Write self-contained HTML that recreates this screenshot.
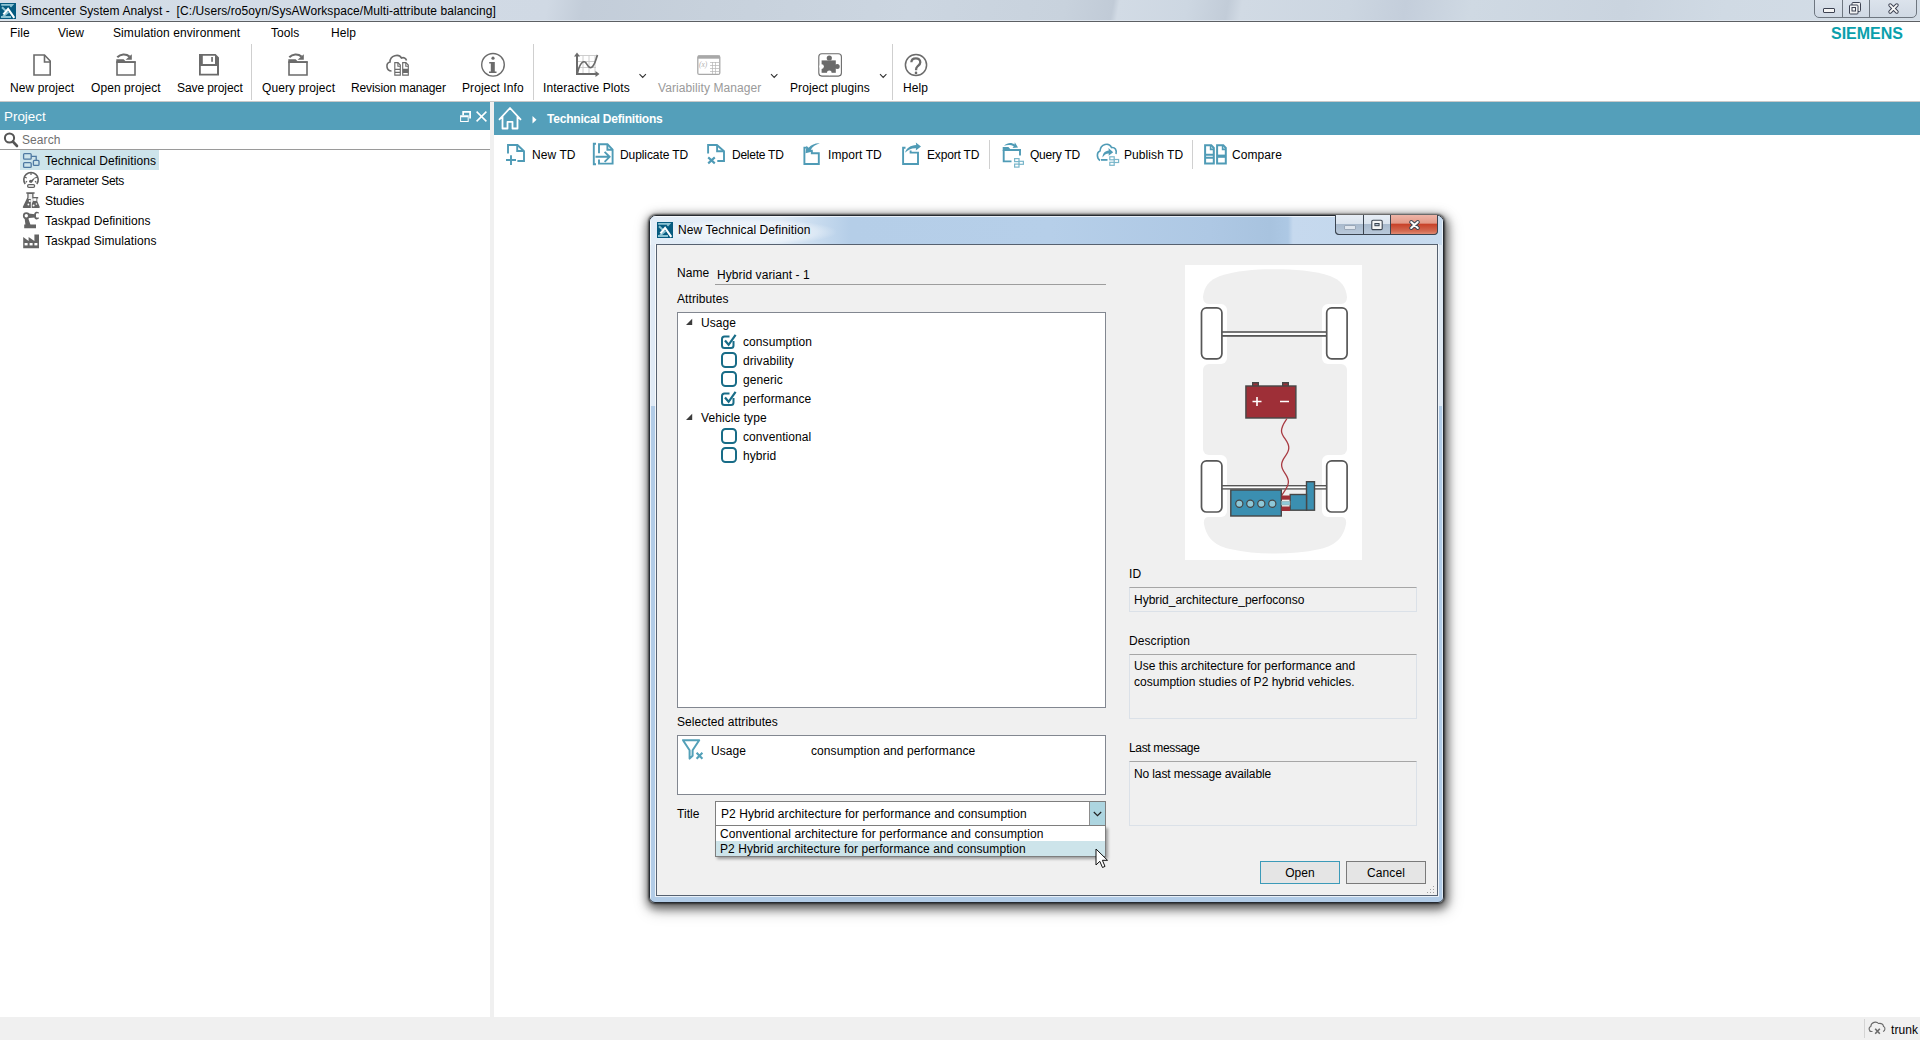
<!DOCTYPE html>
<html><head><meta charset="utf-8">
<style>
*{box-sizing:border-box}
html,body{margin:0;padding:0;overflow:hidden}
body{width:1920px;height:1040px;position:relative;overflow:hidden;background:#fff;font-family:"Liberation Sans",sans-serif;font-size:12px;color:#000}
.a{position:absolute}
.t{position:absolute;white-space:pre;line-height:14px;font-size:12px;letter-spacing:0.08px}
svg{position:absolute;overflow:visible}
</style></head><body>

<!-- ===== Main title bar ===== -->
<div class="a" style="left:0;top:0;width:1920px;height:21px;background:linear-gradient(100deg,#d5dee8 0px,#d0d9e4 540px,#c3cdd9 575px,#c7d1dc 700px,#ccd6e1 900px,#c8d2dd 1050px,#c1cbd7 1097px,#d2dbe5 1103px,#cdd7e2 1170px,#c2ccd8 1210px,#d1dae4 1224px,#ccd6e1 1330px,#c4cedb 1385px,#cfd9e3 1450px,#cad4df 1600px,#d0dae4 1700px,#d4dde7 1920px)"></div>
<div class="a" style="left:0;top:20px;width:1920px;height:1px;background:#dfe6ee"></div>
<div class="a" style="left:0;top:21px;width:1920px;height:1px;background:#5c5f63"></div>
<svg style="left:0;top:3px" width="16" height="16" viewBox="0 0 16 16"><rect width="16" height="16" fill="#065b80"/><path d="M1.2 1.9H12.2L10.4 3.9" fill="none" stroke="#8cc3d3" stroke-width="1.8"/><path d="M2 4.3L7.6 9.6L3 13.4M1 14.1H11" fill="none" stroke="#8cc3d3" stroke-width="2"/><path d="M3.4 11.4L8.1 5.9L14.3 14.8" fill="none" stroke="#fff" stroke-width="2.1"/></svg>
<div class="t" style="left:21px;top:4px">Simcenter System Analyst -  [C:/Users/ro5oyn/SysAWorkspace/Multi-attribute balancing]</div>

<!-- window controls -->
<div class="a" style="left:1814px;top:-3px;width:103px;height:21px;border:1px solid #6e7680;border-radius:0 0 5px 5px;background:linear-gradient(#dde4ed,#d0d9e4)"></div>
<div class="a" style="left:1842px;top:0;width:1px;height:17px;background:#6e7680"></div>
<div class="a" style="left:1869px;top:0;width:1px;height:17px;background:#6e7680"></div>
<div class="a" style="left:1823px;top:8px;width:12px;height:5px;border:1px solid #3d4252;border-radius:1px;background:#f4f4f4"></div>
<svg style="left:1848px;top:1px" width="14" height="14" viewBox="0 0 14 14"><rect x="4" y="1.5" width="8.5" height="9" rx="1" fill="#f0f0f0" stroke="#3d4252"/><rect x="1.5" y="4" width="8.5" height="9" rx="1" fill="#f4f4f4" stroke="#3d4252"/><rect x="4" y="6.5" width="3.5" height="3.5" fill="none" stroke="#3d4252"/></svg>
<svg style="left:1887px;top:2px" width="14" height="14" viewBox="0 0 14 14"><path d="M3.2 3.2L9.8 9.8M9.8 3.2L3.2 9.8" stroke="#3d4252" stroke-width="3.8" stroke-linecap="round"/><path d="M3.2 3.2L9.8 9.8M9.8 3.2L3.2 9.8" stroke="#f6f6f6" stroke-width="1.9" stroke-linecap="round"/></svg>

<!-- ===== Menu bar ===== -->
<div class="t" style="left:10px;top:26px">File</div>
<div class="t" style="left:58px;top:26px">View</div>
<div class="t" style="left:113px;top:26px">Simulation environment</div>
<div class="t" style="left:271px;top:26px">Tools</div>
<div class="t" style="left:331px;top:26px">Help</div>
<div class="t" style="left:1831px;top:25px;font-size:16px;line-height:18px;font-weight:bold;color:#0a9fac;letter-spacing:0">SIEMENS</div>

<!-- ===== Toolbar ===== -->
<svg style="left:0;top:0" width="940" height="100" viewBox="0 0 940 100">
 <g fill="none" stroke="#6b6b6b" stroke-width="1.6">
  <!-- new project -->
  <path d="M34 55H44.5L50.2 61V75H34Z"/><path d="M44.5 55V62H50.2"/>
  <!-- open project -->
  <path d="M117 75V62H135V75Z"/>
  <!-- save -->
  
  <!-- query project -->
  <path d="M289 75V62H307V75Z"/>
  <!-- revision cloud -->
  <path d="M391.5 71C386 71 385.5 63 390 62C390 55 399 53.5 401.5 58C403.5 57 406 58 406.5 60.5"/>
  <path d="M394.8 75.1V62.6H397.9L400.3 65V75.1Z M394.8 69.4H400.3 M394.8 72.3H400.3" stroke-width="1.15"/>
  <path d="M402.7 75.1V62.6H405.8L408.3 65V75.1Z M402.7 72.3H408.3 M402.7 69.4H408.3" stroke-width="1.15"/>
  <path d="M397.9 62.6V66.2H400.3M405.8 62.6V66.2H408.3" stroke-width="1.1"/>
  <!-- info -->
  <circle cx="493" cy="64.8" r="11.3" stroke-width="1.4"/>
  <!-- chart grid -->
  <path d="M578 55.5H596M578 61.5H596M578 67.5H596M583 55.5V74M589 55.5V74M595 55.5V74" stroke="#c8c8c8" stroke-width="0.9"/>
  <path d="M577 55V74H596" stroke-width="2"/>
  <path d="M577.5 73C580 62 584 60 586 63S590 70 593 66S596 58 597.5 55" stroke-width="1.7"/>
  <!-- chevrons -->
  <path d="M639.5 74.2L642.7 77.4L645.9 74.2M771 74.2L774.2 77.4L777.4 74.2M880 74.2L883.2 77.4L886.4 74.2" stroke="#333" stroke-width="1.1"/>
  <!-- variability -->
  <rect x="697.8" y="55.8" width="22" height="18.6" rx="1.5" stroke="#a8a8a8" stroke-width="1.3"/>
  <path d="M710 62.5H719M710 65.5H719M710 68.5H719M710 71.5H719M712.5 62V74M715.5 62V74" stroke="#b5b5b5" stroke-width="0.7"/>
  <!-- puzzle -->
  <rect x="818.8" y="53.7" width="22.6" height="22.4" rx="3" stroke-width="1.1"/>
  <!-- help -->
  <circle cx="916" cy="65" r="10.6" stroke-width="1.5"/>
  <path d="M911.4 62.3C911.4 59.7 913.4 58.3 915.9 58.3C918.5 58.3 920.3 60 920.3 62.3C920.3 64.5 918.6 65.4 917.4 66.5C916.6 67.2 916.1 67.9 916.1 69.4V70.2" stroke-width="2.3"/>
 </g>
 <g fill="#6b6b6b">
  <path d="M116.3 63V59.2H123.6L125.6 61.2H135.6V63Z"/>
  <path d="M117.3 57.2C120.5 54 125.8 53.4 129.6 56.6" fill="none" stroke="#6b6b6b" stroke-width="2.1"/><path d="M125.6 59.8H131.8V54.2Z"/>
  <path d="M288.3 63V59.2H295.6L297.6 61.2H307.6V63Z"/>
  <path d="M289.3 57.2C292.5 54 297.8 53.4 301.6 56.6" fill="none" stroke="#6b6b6b" stroke-width="2.1"/><path d="M297.6 59.8H303.8V54.2Z"/>
  <path fill-rule="evenodd" d="M199 54H215.6L219 57.4V75.6H199Z M202.8 55.8H215V64.1H202.8Z M200.8 66H217V73.8H200.8Z"/>
  <rect x="211.2" y="57" width="1.7" height="4.8"/>
  <rect x="402.7" y="69.4" width="5.6" height="2.9"/>
  <circle cx="493" cy="58.2" r="1.6"/>
  <path d="M489.2 62H494.8V71.5H496.5V73H489V71.5H490.8V63.5H489.2Z"/>
  <path d="M574 56.5L577 52.5L580 56.5Z M595.5 71L599.5 74L595.5 77Z"/>
  <rect x="698" y="55.5" width="22" height="3.2" fill="#a8a8a8"/>
  <text x="699" y="67" font-family="Liberation Serif" font-style="italic" font-size="7.5" fill="#b0b0b0">(x)</text>
  <rect x="821.6" y="60.4" width="14.2" height="12.4"/><circle cx="829.3" cy="58" r="2.6"/><circle cx="837.2" cy="66.4" r="2.5"/><circle cx="821.6" cy="66.6" r="2.3" fill="#fff"/><circle cx="829.3" cy="72.9" r="2.4" fill="#fff"/>
  <circle cx="916" cy="72.9" r="1.3"/>
 </g>
 <!-- separators -->
 <rect x="251" y="44" width="1" height="56" fill="#cfcfcf"/>
 <rect x="533" y="44" width="1" height="56" fill="#cfcfcf"/>
 <rect x="892" y="44" width="1" height="56" fill="#cfcfcf"/>
</svg>
<div class="t" style="left:10px;top:81px">New project</div>
<div class="t" style="left:91px;top:81px">Open project</div>
<div class="t" style="left:177px;top:81px;letter-spacing:-0.09px">Save project</div>
<div class="t" style="left:262px;top:81px">Query project</div>
<div class="t" style="left:351px;top:81px;letter-spacing:-0.12px">Revision manager</div>
<div class="t" style="left:462px;top:81px">Project Info</div>
<div class="t" style="left:543px;top:81px">Interactive Plots</div>
<div class="t" style="left:658px;top:81px;color:#9a9a9a">Variability Manager</div>
<div class="t" style="left:790px;top:81px">Project plugins</div>
<div class="t" style="left:903px;top:81px">Help</div>


<!-- ===== Header bars ===== -->
<div class="a" style="left:0;top:101px;width:1920px;height:1px;background:#c9c9c9"></div>
<div class="a" style="left:0;top:102px;width:490px;height:28px;background:#549fba"></div>
<div class="t" style="left:4px;top:109px;font-size:13.4px;line-height:16px;color:#fff;letter-spacing:0">Project</div>
<div class="a" style="left:490px;top:102px;width:4px;height:915px;background:#f0f0f0"></div>
<div class="a" style="left:494px;top:102px;width:1426px;height:33px;background:#549fba"></div>
<div class="t" style="left:547px;top:112px;font-weight:bold;color:#fff;letter-spacing:-0.2px">Technical Definitions</div>

<!-- ===== Left panel ===== -->
<svg style="left:458px;top:108px" width="32" height="18" viewBox="0 0 32 18">
 <g fill="#fff">
  <path d="M4.3 3.1H13V10.5H11.2V4.8H6V7.3H4.3Z"/>
  <path d="M2.1 7.3H10.7V13.9H2.1ZM3.1 9.2V12.9H9.7V9.2Z" fill-rule="evenodd"/>
 </g>
 <path d="M18.6 3.6L28.4 13.4M28.4 3.6L18.6 13.4" stroke="#fff" stroke-width="1.5"/>
</svg>
<svg style="left:0;top:128px" width="490" height="125" viewBox="0 128 490 125">
 <circle cx="9.5" cy="138" r="4.6" fill="none" stroke="#555" stroke-width="2"/>
 <path d="M12.8 141.5L17 146" stroke="#555" stroke-width="2.6" stroke-linecap="round"/>
 <rect x="0" y="149" width="490" height="1" fill="#9a9a9a"/>
 <rect x="20" y="150" width="139" height="20" fill="#cde4eb"/>
 <g fill="none" stroke="#4e79a2" stroke-width="1.3">
  <rect x="23.6" y="153.6" width="7.6" height="5.6" rx="1"/>
  <rect x="33.4" y="160.4" width="5.6" height="5" rx="1"/>
  <rect x="23.6" y="162.6" width="7.6" height="4.8" rx="1"/>
  <path d="M31.2 156.4H36.2V160.4"/>
 </g>
 <g fill="none" stroke="#616161" stroke-width="1.6">
  <path d="M25.2 184A7.2 7.2 0 1 1 36.8 184"/>
  <path d="M31 172.5V175M25 177.3L26.8 178M37 177.3L35.2 178M25.8 182.2L27 181.2M36.2 182.2L35 181.2" stroke-width="1.2"/>
  <rect x="27.6" y="184.6" width="7" height="2.8" rx="1.3" stroke-width="1.3"/>
 </g>
 <path d="M29.2 181.8L35.8 176.8L31.8 182.8Z" fill="#616161"/><circle cx="30.6" cy="181.2" r="1.5" fill="#616161"/>
 <g fill="#646464">
  <path d="M26.3 192.2H34.6V193.8H33.5V197.5L34 199H31.2V208H23.6C22.8 208 22.6 207.3 23 206.6L27.3 197.6V193.8H26.3Z"/>
  <path d="M31.8 197H38.2V198.4H37.3V201.3L39.6 206.5C40 207.4 39.6 208 38.8 208H31.2V205L32.8 201.3V198.4H31.8Z"/>
 </g>
 <g fill="#fff">
  <path d="M28.6 194H32.2V197.8L32.8 199H28.2L28.6 197.8Z" opacity="0.9"/>
  <rect x="33.2" y="198.3" width="3.2" height="2.6"/>
  <circle cx="29.8" cy="201" r="1.1"/><circle cx="28.4" cy="204.5" r="0.9"/><circle cx="33.6" cy="205.4" r="1"/><circle cx="36.4" cy="204" r="0.8"/>
 </g>
 <path d="M31.3 199V208" stroke="#fff" stroke-width="0.8"/>
 <g fill="#646464">
  <circle cx="26.3" cy="215.7" r="3.4"/>
  <path d="M26.5 213.3L35 214.2V217.4L26.5 218.2Z"/>
  <path d="M34.3 213.6C35 211.4 37.4 211.2 39 212.5L38.4 213.8C37.6 213.1 36.2 213.1 36 214.4V216.8C36.2 218 37.6 218 38.4 217.3L39 218.6C37.4 220 35 219.6 34.3 217.4Z"/>
  <path d="M24.6 218L28 217.5L30.4 224.5H36V228.2H24.2V224.5H25.4Z"/>
  <path d="M23.2 248.2V237L28.6 241V237L34.4 241V234.4H39V248.2Z"/>
 </g>
 <circle cx="26.3" cy="215.7" r="1.7" fill="#fff"/>
 <g fill="#fff"><rect x="24.6" y="243" width="3" height="2.4"/><rect x="29.6" y="243" width="3" height="2.4"/><rect x="34.4" y="243" width="3" height="2.4"/></g>
</svg>
<div class="t" style="left:22px;top:133px;color:#6f6f6f">Search</div>
<div class="t" style="left:45px;top:154px">Technical Definitions</div>
<div class="t" style="left:45px;top:174px;letter-spacing:-0.31px">Parameter Sets</div>
<div class="t" style="left:45px;top:194px;letter-spacing:-0.12px">Studies</div>
<div class="t" style="left:45px;top:214px">Taskpad Definitions</div>
<div class="t" style="left:45px;top:234px">Taskpad Simulations</div>


<!-- ===== TD header + toolbar ===== -->
<svg style="left:494px;top:102px" width="800" height="70" viewBox="494 102 800 70">
 <path d="M499 119.8L510 108L521 119.8M502.5 116.5V128.5H507.5V121.8H512.5V128.5H517.5V116.5" fill="none" stroke="#fff" stroke-width="1.8" stroke-linejoin="round"/>
 <path d="M532.5 116V123.5L536.5 119.8Z" fill="#fff"/>
 <g fill="none" stroke="#4f9bb6" stroke-width="1.9">
  <!-- new td -->
  <path d="M508 153.4V145H517.5L524 151.2V161H517.4"/><path d="M517.2 145V151H524"/>
  <path d="M511 155.2V165M506 160H516"/>
  <!-- duplicate -->
  <path d="M596 143.8H593.8V164.3H596"/>
  <path d="M599 153.3V144.3H607.5L612.6 149.6V163.6H599V159.6"/><path d="M607.4 144.3V149.8H612.6"/>
  <path d="M595.5 156.8H609M604.6 151.8L609.6 156.8L604.6 161.8"/>
  <!-- delete -->
  <path d="M708.1 153.6V145H716.9L724 151.2V161H717.3"/><path d="M717.1 145V151.2H724"/>
  <path d="M708.2 157.4L714.8 163.4M714.8 157.4L708.2 163.4" stroke-width="2.1"/>
  <!-- import -->
  <path d="M806.8 147.6H804.4V164H818.8V153.2H811.8V149.8"/>
  <!-- export -->
  <path d="M905.5 147.8H903.1V164H918V152.6H910.6V150.4"/>
  <!-- query -->
  <path d="M1003.7 150V161.4H1011.5M1020 155.5V150H1003.7"/>
  <!-- publish cloud -->
  <path d="M1100 160.5C1096.5 158 1096.5 152 1100 151C1100.5 144 1109 142 1111.5 147.5C1115 147 1117 150 1116 154" stroke-width="1.6"/>
  <path d="M1101 159.9H1107.5" stroke-width="1.8"/>
  <!-- compare -->
  <path d="M1205.1 145.3H1211.3L1213.8 148V163.6H1205.1Z M1205.1 154.8H1213.8M1205.1 157.8H1213.8" stroke-width="2"/>
  <path d="M1217.1 145.3H1223.3L1225.8 148V163.6H1217.1Z" stroke-width="2"/>
  <path d="M1210.6 145.3V149.4H1213.8M1222.6 145.3V149.4H1225.8" stroke-width="1.6"/>
 </g>
 <g fill="#4f9bb6">
  <path d="M805.5 153.3L806.5 145.8L808.6 147.8C811.5 144.6 815.5 143 819.8 143.3C815.5 144.8 812.6 146.6 810.8 149.8L812.8 151.6Z"/>
  <path d="M905 152.8C906.5 148 910.5 145.2 916.2 145L915.8 142.5L921 146.6L915.8 150.5L916 148.2C911.5 148 907.8 149.8 905 152.8Z"/>
  <path d="M1002.7 151V147H1008.4L1010.2 149H1021V151Z"/>
  <path d="M1004 145.8C1007.5 142.4 1012 142.4 1014.5 144.6L1014.8 142.2L1018 147.6L1012.5 148L1013.8 146.5C1011.5 145 1007.5 144.6 1004 145.8Z"/>
  <path d="M1102.5 157.5C1102.6 153.5 1105 150.8 1108.8 150.5L1108.4 148L1113.2 152.2L1108.6 155.8L1108.8 153.4C1106 153.4 1104 155 1102.5 157.5Z"/>
  <rect x="1217.1" y="154.6" width="8.7" height="3.2"/>
 </g>
 <g fill="none" stroke="#79b6ca" stroke-width="1.2">
  <rect x="1014.6" y="158.6" width="4.4" height="3"/><rect x="1019" y="161.3" width="4.4" height="3"/><rect x="1014.6" y="164.1" width="4.4" height="3"/>
  <rect x="1109.8" y="156.8" width="4.4" height="3"/><rect x="1114.2" y="159.5" width="4.4" height="3"/><rect x="1109.8" y="162.3" width="4.4" height="3"/>
 </g>
 <rect x="989" y="140" width="1" height="29" fill="#d0d0d0"/>
 <rect x="1192" y="140" width="1" height="29" fill="#d0d0d0"/>
</svg>
<div class="t" style="left:532px;top:148px">New TD</div>
<div class="t" style="left:620px;top:148px;letter-spacing:-0.09px">Duplicate TD</div>
<div class="t" style="left:732px;top:148px;letter-spacing:-0.25px">Delete TD</div>
<div class="t" style="left:828px;top:148px">Import TD</div>
<div class="t" style="left:927px;top:148px;letter-spacing:-0.17px">Export TD</div>
<div class="t" style="left:1030px;top:148px;letter-spacing:-0.22px">Query TD</div>
<div class="t" style="left:1124px;top:148px">Publish TD</div>
<div class="t" style="left:1232px;top:148px">Compare</div>


<!-- ===== Status bar ===== -->
<div class="a" style="left:0;top:1017px;width:1920px;height:23px;background:#f0f0f0"></div>
<div class="a" style="left:1864px;top:1019px;width:1px;height:19px;background:#d4d4d4"></div>
<svg style="left:1866px;top:1019px" width="22" height="20" viewBox="1866 1019 22 20">
 <path d="M1872.5 1031.5H1871.5C1868.8 1031.5 1868.2 1027.3 1870.8 1026.5C1871 1022 1876.5 1021 1878.5 1023.5C1881.5 1022.8 1883.5 1024.5 1883.5 1026.5C1885.5 1027 1885.5 1030.8 1883 1031.5" fill="none" stroke="#6a6a6a" stroke-width="1.1"/>
 <path d="M1875.2 1028.8L1879.8 1033.8M1879.8 1028.8L1875.2 1033.8" stroke="#6a6a6a" stroke-width="1.6"/>
</svg>
<div class="t" style="left:1891px;top:1023px">trunk</div>

<!-- ===== Dialog ===== -->
<div class="a" style="left:649px;top:215px;width:795px;height:688px;border-radius:7px 7px 6px 6px;box-shadow:0 0 2px 1px rgba(0,0,0,0.55),1px 3px 9px 3px rgba(0,0,0,0.5),2px 5px 16px 2px rgba(0,0,0,0.25)"></div>
<div class="a" style="left:649px;top:215px;width:795px;height:688px;border:1px solid #252a31;border-radius:7px 7px 6px 6px;background:#b2cce7;overflow:hidden">
  <div class="a" style="left:0;top:0;width:793px;height:29px;background:linear-gradient(90deg,#e3edf7 0px,#dde9f5 130px,#c6daee 170px,#b5cee8 200px,#b6cfe9 400px,#aec8e4 560px,#a8c3df 620px,#adc8e4 638px,#c6d9ee 643px,#c4d8ed 700px,#c8dbef 793px)"></div>
  <div class="a" style="left:0;top:0;width:793px;height:1px;background:rgba(255,255,255,0.7)"></div>
  <div class="a" style="left:0;top:0;width:1px;height:686px;background:rgba(255,255,255,0.75)"></div>
  <div class="a" style="left:792px;top:0;width:1px;height:686px;background:rgba(255,255,255,0.6)"></div>
  <div class="a" style="left:1px;top:29px;width:5px;height:161px;background:#e0eaf5"></div>
  <div class="a" style="left:789px;top:29px;width:4px;height:161px;background:#e0eaf5"></div>
  <div class="a" style="left:5px;top:28px;width:1px;height:652px;background:rgba(255,255,255,0.8)"></div>
  <div class="a" style="left:788px;top:28px;width:1px;height:652px;background:rgba(255,255,255,0.8)"></div>
  <div class="a" style="left:5px;top:680px;width:784px;height:1px;background:rgba(255,255,255,0.7)"></div>
  <div class="a" style="left:14px;top:3px;width:172px;height:26px;background:radial-gradient(ellipse at 50% 50%,rgba(255,255,255,0.6) 0%,rgba(255,255,255,0.35) 55%,rgba(255,255,255,0) 72%)"></div>
</div>
<svg style="left:657px;top:222px" width="16" height="16" viewBox="0 0 16 16"><rect width="16" height="16" fill="#065b80"/><path d="M1.2 1.9H12.2L10.4 3.9" fill="none" stroke="#8cc3d3" stroke-width="1.8"/><path d="M2 4.3L7.6 9.6L3 13.4M1 14.1H11" fill="none" stroke="#8cc3d3" stroke-width="2"/><path d="M3.4 11.4L8.1 5.9L14.3 14.8" fill="none" stroke="#fff" stroke-width="2.1"/></svg>
<div class="t" style="left:678px;top:223px">New Technical Definition</div>
<!-- title buttons -->
<div class="a" style="left:1335px;top:215px;width:103px;height:20px;border:1px solid #3b4450;border-top:none;border-radius:0 0 4px 4px;overflow:hidden;background:#3b4450">
  <div class="a" style="left:0;top:0;width:27px;height:19px;border-radius:0 0 0 3px;background:linear-gradient(#e6edf5 0%,#dbe4ee 45%,#a9bacd 50%,#b9c9db 100%)"></div>
  <div class="a" style="left:28px;top:0;width:26px;height:19px;background:linear-gradient(#e6edf5 0%,#dbe4ee 45%,#a9bacd 50%,#b9c9db 100%)"></div>
  <div class="a" style="left:55px;top:0;width:47px;height:19px;border-radius:0 0 3px 0;background:linear-gradient(#eeb5a8 0%,#e39a88 42%,#c8432a 50%,#d36a52 85%,#e08a73 100%)"></div>
</div>
<div class="a" style="left:1344px;top:225px;width:12px;height:5px;border:1px solid #9aa8b8;border-radius:1px;background:#dfe6ee"></div>
<svg style="left:1370px;top:219px" width="14" height="12" viewBox="0 0 14 12"><rect x="1.8" y="1.2" width="10.4" height="9.4" rx="1.2" fill="#f6f6f6" stroke="#3b4450" stroke-width="1.1"/><rect x="4.4" y="4" width="5.2" height="3.2" fill="#3b4450"/><rect x="5.4" y="5" width="3.2" height="1.2" fill="#b9c7d6"/></svg>
<svg style="left:1407px;top:218px" width="16" height="14" viewBox="0 0 16 14"><path d="M4.2 4L10.8 10M10.8 4L4.2 10" stroke="#3b4450" stroke-width="4" stroke-linecap="round"/><path d="M4.2 4L10.8 10M10.8 4L4.2 10" stroke="#fbfbfb" stroke-width="2" stroke-linecap="round"/></svg>

<!-- content -->
<div class="a" style="left:656px;top:244px;width:782px;height:652px;border:1px solid #566170;background:#f0f0f0"></div>

<div class="t" style="left:677px;top:266px">Name</div>
<div class="t" style="left:717px;top:268px">Hybrid variant - 1</div>
<div class="a" style="left:715px;top:284px;width:391px;height:1px;background:#9d9d9d"></div>
<div class="t" style="left:677px;top:292px">Attributes</div>

<div class="a" style="left:677px;top:312px;width:429px;height:396px;border:1px solid #828790;background:#fff"></div>
<svg style="left:677px;top:312px" width="100" height="160" viewBox="677 312 100 160">
 <path d="M686 325H692.2V318.8Z M686 420H692.2V413.8Z" fill="#3c3c3c"/>
 <g fill="none" stroke="#186c87" stroke-width="2">
  <path d="M733.5 341V345.5C733.5 347 732.5 348 731 348H724.5C723 348 722 347 722 345.5V339C722 337.5 723 336.5 724.5 336.5H729.5"/>
  <path d="M725 340.5L728.6 344.8L735.6 334.8" stroke-width="2.2"/>
  <rect x="722" y="353" width="14" height="14" rx="3.5"/>
  <rect x="722" y="372" width="14" height="14" rx="3.5"/>
  <path d="M733.5 398V402.5C733.5 404 732.5 405 731 405H724.5C723 405 722 404 722 402.5V396C722 394.5 723 393.5 724.5 393.5H729.5"/>
  <path d="M725 397.5L728.6 401.8L735.6 391.8" stroke-width="2.2"/>
  <rect x="722" y="429" width="14" height="14" rx="3.5"/>
  <rect x="722" y="448" width="14" height="14" rx="3.5"/>
 </g>
</svg>
<div class="t" style="left:701px;top:316px">Usage</div>
<div class="t" style="left:743px;top:335px">consumption</div>
<div class="t" style="left:743px;top:354px">drivability</div>
<div class="t" style="left:743px;top:373px">generic</div>
<div class="t" style="left:743px;top:392px">performance</div>
<div class="t" style="left:701px;top:411px">Vehicle type</div>
<div class="t" style="left:743px;top:430px">conventional</div>
<div class="t" style="left:743px;top:449px">hybrid</div>

<div class="t" style="left:677px;top:715px">Selected attributes</div>
<div class="a" style="left:677px;top:735px;width:429px;height:60px;border:1px solid #828790;background:#fff"></div>
<svg style="left:680px;top:737px" width="28" height="26" viewBox="680 737 28 26">
 <path d="M683 740.2H699.2L692.6 750.2V755.8L689.6 758.6V750.2Z" fill="none" stroke="#53a0b8" stroke-width="2" stroke-linejoin="round"/>
 <path d="M696.6 752.8L702.4 758.8M702.4 752.8L696.6 758.8" stroke="#53a0b8" stroke-width="2.1"/>
</svg>
<div class="t" style="left:711px;top:744px">Usage</div>
<div class="t" style="left:811px;top:744px">consumption and performance</div>

<div class="t" style="left:677px;top:807px">Title</div>
<div class="a" style="left:715px;top:801px;width:391px;height:25px;border:1px solid #7e7e7e;background:#fff"></div>
<div class="a" style="left:1089px;top:802px;width:16px;height:23px;border-left:1px solid #8d8d8d;background:#add5e0"></div>
<svg style="left:1089px;top:802px" width="16" height="23" viewBox="1089 802 16 23"><path d="M1093.8 812L1097.5 815.7L1101.2 812" fill="none" stroke="#222" stroke-width="1.2"/></svg>
<div class="t" style="left:721px;top:807px">P2 Hybrid architecture for performance and consumption</div>

<!-- dropdown list -->
<div class="a" style="left:717px;top:828px;width:391px;height:31px;background:rgba(0,0,0,0.35);filter:blur(1.5px)"></div>
<div class="a" style="left:715px;top:825px;width:391px;height:32px;border:1px solid #7e7e7e;border-top:none;background:#fff"></div>
<div class="a" style="left:716px;top:841px;width:389px;height:15px;background:#cde4ea"></div>
<div class="a" style="left:715px;top:825px;width:391px;height:1px;background:#7e7e7e"></div>
<div class="t" style="left:720px;top:827px">Conventional architecture for performance and consumption</div>
<div class="t" style="left:720px;top:842px">P2 Hybrid architecture for performance and consumption</div>

<!-- right column -->
<div class="a" style="left:1185px;top:265px;width:177px;height:295px;background:#fff"></div>
<svg style="left:1185px;top:265px" width="177" height="295" viewBox="1185 265 177 295">
 <g fill="#efefef">
  <rect x="1215" y="296" width="120" height="75"/>
  <rect x="1215" y="449" width="120" height="75"/>
 </g>
 <g fill="#fff">
  <rect x="1185" y="304" width="42" height="60" rx="6"/>
  <rect x="1322" y="304" width="40" height="60" rx="6"/>
  <rect x="1185" y="455" width="42" height="62" rx="6"/>
  <rect x="1322" y="455" width="40" height="62" rx="6"/>
 </g>
 <g fill="#efefef">
  <path d="M1203 297C1204 287 1209 280 1220 276C1237 270.5 1256 269.3 1275 269.3C1294 269.3 1313 270.5 1330 276C1341 280 1346 287 1347 297Q1347 304 1341 304H1209Q1203 304 1203 297Z"/>
  <rect x="1203" y="364" width="144" height="91" rx="6"/>
  <path d="M1209 517H1341Q1347 517 1346 524C1344 535 1338 545 1320 549C1305 552.5 1290 553.5 1275 553.5C1260 553.5 1245 552.5 1230 549C1212 545 1206 535 1204 524Q1203 517 1209 517Z"/>
 </g>
 <g fill="#575757">
  <rect x="1222" y="331.2" width="105" height="5.6"/>
  <rect x="1222" y="485" width="105" height="4.6"/>
 </g>
 <rect x="1222" y="332.8" width="105" height="2.2" fill="#fff"/>
 <rect x="1222" y="486.4" width="105" height="1.8" fill="#fff"/>
 <g fill="#fff" stroke="#575757" stroke-width="1.7">
  <rect x="1201.5" y="307.8" width="20.4" height="51" rx="5"/>
  <rect x="1326.7" y="307.8" width="20.4" height="51" rx="5"/>
  <rect x="1201.5" y="460.8" width="20.4" height="51.2" rx="5"/>
  <rect x="1326.7" y="460.8" width="20.4" height="51.2" rx="5"/>
 </g>
 <g stroke="#464646" stroke-width="1.4">
  <path d="M1252.7 386V382.7H1258.3V386M1282.7 386V382.7H1288.3V386" fill="#9e2f37"/>
  <rect x="1245.9" y="386" width="50" height="32" fill="#9e2f37"/>
 </g>
 <path d="M1252.5 401.5H1261.5M1257 397V406M1280 401.5H1289" stroke="#fff" stroke-width="1.6"/>
 <path d="M1287 418.5C1284 423 1281.5 426 1281.5 431C1281.5 437 1289 441 1288.8 448C1288.6 455 1281.5 458 1281.6 465C1281.7 472 1288.5 475 1288.4 482C1288.3 488 1283 492 1281.5 496" fill="none" stroke="#a83a42" stroke-width="1.3"/>
 <g stroke="#464646" stroke-width="1.4" fill="#3b8fb1">
  <rect x="1306.5" y="481.7" width="8" height="28.5"/>
  <rect x="1290.2" y="494.5" width="16.3" height="15.7"/>
  <rect x="1230.8" y="490" width="50.5" height="26"/>
 </g>
 <g fill="#9e2f37"><rect x="1281.5" y="495.5" width="8.5" height="4.2"/><rect x="1281.5" y="506.5" width="8.5" height="4.5"/></g>
 <rect x="1281.5" y="501.2" width="8.5" height="3.8" fill="#8ec8d8" stroke="#9aa" stroke-width="0.5"/>
 <g fill="#8ec8d8" stroke="#464646" stroke-width="1.2">
  <circle cx="1239.3" cy="503.7" r="3.6"/><circle cx="1250.3" cy="503.7" r="3.6"/><circle cx="1261.3" cy="503.7" r="3.6"/><circle cx="1272.3" cy="503.7" r="3.6"/>
 </g>
</svg>


<div class="t" style="left:1129px;top:567px">ID</div>
<div class="a" style="left:1129px;top:587px;width:288px;height:25px;border:1px solid #dbe1e8;border-top-color:#a6a6a6;background:#f0f0f0"></div>
<div class="t" style="left:1134px;top:593px;letter-spacing:0.01px">Hybrid_architecture_perfoconso</div>
<div class="t" style="left:1129px;top:634px">Description</div>
<div class="a" style="left:1129px;top:654px;width:288px;height:65px;border:1px solid #dbe1e8;border-top-color:#a6a6a6;background:#f0f0f0"></div>
<div class="t" style="left:1134px;top:659px;line-height:15.5px;letter-spacing:0.01px">Use this architecture for performance and
cosumption studies of P2 hybrid vehicles.</div>
<div class="t" style="left:1129px;top:741px;letter-spacing:-0.35px">Last message</div>
<div class="a" style="left:1129px;top:761px;width:288px;height:65px;border:1px solid #dbe1e8;border-top-color:#a6a6a6;background:#f0f0f0"></div>
<div class="t" style="left:1134px;top:767px;letter-spacing:-0.12px">No last message available</div>

<div class="a" style="left:1260px;top:861px;width:80px;height:23px;border:1px solid #3c9ab8;background:#e5e5e5"></div>
<div class="t" style="left:1260px;top:866px;width:80px;text-align:center">Open</div>
<div class="a" style="left:1346px;top:861px;width:80px;height:23px;border:1px solid #7a7a7a;background:#e5e5e5"></div>
<div class="t" style="left:1346px;top:866px;width:80px;text-align:center">Cancel</div>
<svg style="left:1426px;top:884px" width="10" height="10" viewBox="0 0 10 10" fill="#a0a0a0"><rect x="7" y="2" width="1" height="1"/><rect x="4" y="5" width="1" height="1"/><rect x="7" y="5" width="1" height="1"/><rect x="1" y="8" width="1" height="1"/><rect x="4" y="8" width="1" height="1"/><rect x="7" y="8" width="1" height="1"/></svg>

<!-- cursor -->
<svg style="left:1095px;top:848px" width="14" height="22" viewBox="0 0 14 22"><path d="M1 1V17L4.8 13.3L7.5 19.5L10 18.4L7.4 12.3H12.5Z" fill="#fff" stroke="#111" stroke-width="1" stroke-linejoin="round"/></svg>


</body></html>
